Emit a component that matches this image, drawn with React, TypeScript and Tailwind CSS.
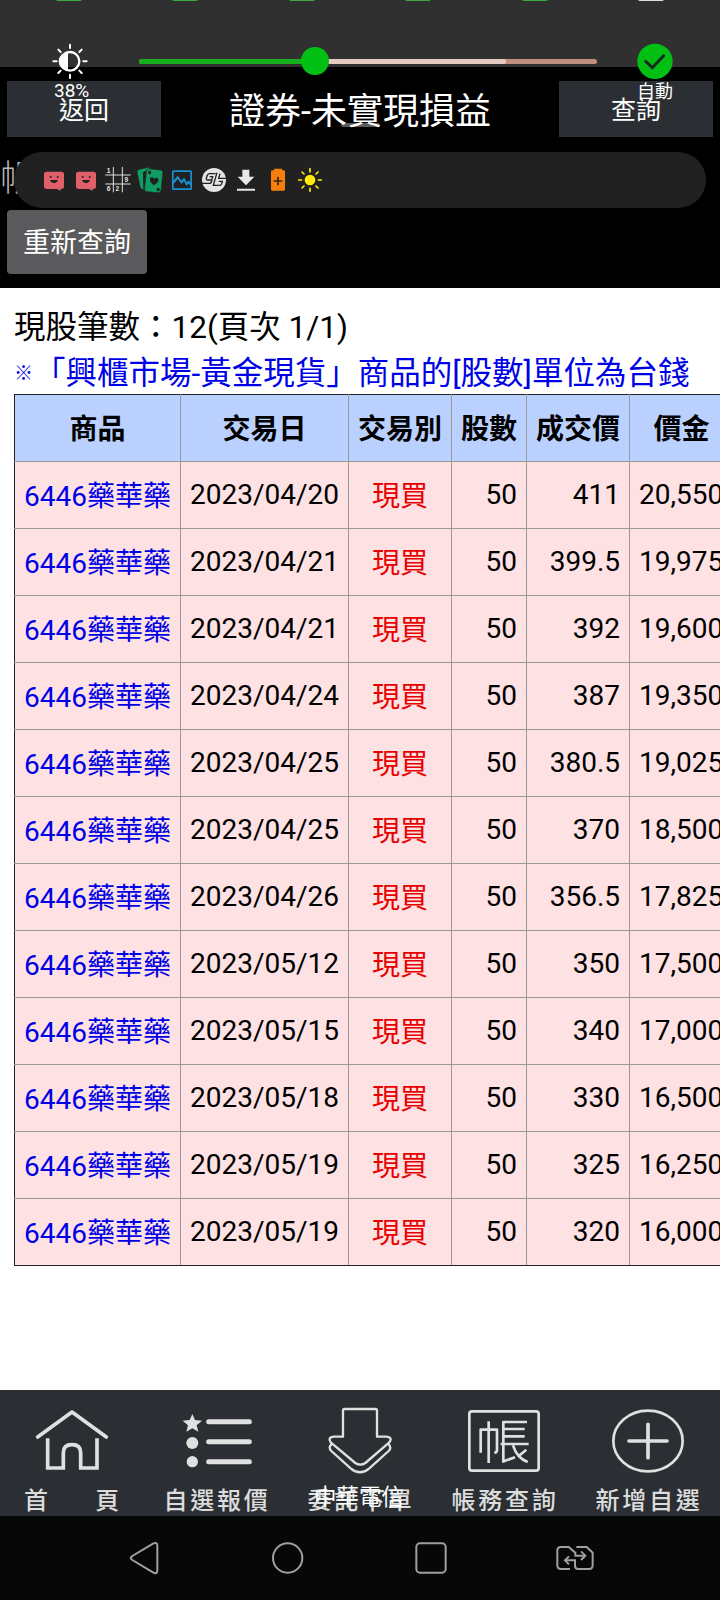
import type { ReactNode } from 'react';

const trades = [
  { date: '2023/04/20', price: '411', amount: '20,550' },
  { date: '2023/04/21', price: '399.5', amount: '19,975' },
  { date: '2023/04/21', price: '392', amount: '19,600' },
  { date: '2023/04/24', price: '387', amount: '19,350' },
  { date: '2023/04/25', price: '380.5', amount: '19,025' },
  { date: '2023/04/25', price: '370', amount: '18,500' },
  { date: '2023/04/26', price: '356.5', amount: '17,825' },
  { date: '2023/05/12', price: '350', amount: '17,500' },
  { date: '2023/05/15', price: '340', amount: '17,000' },
  { date: '2023/05/18', price: '330', amount: '16,500' },
  { date: '2023/05/19', price: '325', amount: '16,250' },
  { date: '2023/05/19', price: '320', amount: '16,000' },
];

function StatusIcon({ children }: { children: ReactNode }) {
  return (
    <svg viewBox="0 0 96 96" className="h-8 w-8 shrink-0">
      {children}
    </svg>
  );
}

function ChatIcon() {
  return (
    <StatusIcon>
      <path
        d="M26 23h44q8 0 8 8v36q0 8-8 8h-2l-1 6-10-6H26q-8 0-8-8V31q0-8 8-8z"
        fill="#e0606a"
      />
      <circle cx="38" cy="39" r="3" fill="#222" />
      <circle cx="59" cy="39" r="3" fill="#222" />
      <path d="M36 48h24q-3 9-12 9t-12-9z" fill="#222" />
    </StatusIcon>
  );
}

function StatusPill() {
  return (
    <div className="absolute top-[152px] left-[14px] flex h-14 w-[692px] items-center rounded-full bg-[#212121] pl-6">
      <ChatIcon />
      <ChatIcon />
      <StatusIcon>
        <path d="M34 9v76M61 9v76M10 33h76M10 60h76" stroke="#e0e0e0" strokeWidth="3" />
        <g fill="#e0e0e0" fontSize="20" fontWeight="bold" textAnchor="middle" fontFamily="Liberation Sans, sans-serif">
          <text x="20" y="28">1</text>
          <text x="73" y="55">9</text>
          <text x="20" y="82">6</text>
          <text x="46" y="82">2</text>
        </g>
      </StatusIcon>
      <StatusIcon>
        <path d="M15 17l27-6q5-1 6 3l2 6-17 1q-6 1-6 7l1 49-5-3q-3-2-4-6L10 25q-1-6 5-8z" fill="#0f9b62" />
        <g transform="rotate(6 60 52)">
          <rect x="34" y="16" width="50" height="69" rx="8" fill="#0f9b62" stroke="#212121" strokeWidth="2" />
          <path d="M60 64c-7-6-13-11-13-17 0-7 9-9 13-2 4-7 13-5 13 2 0 6-6 11-13 17z" fill="#212121" />
          <circle cx="44" cy="27" r="5" fill="#212121" />
          <circle cx="75" cy="75" r="5" fill="#212121" />
        </g>
      </StatusIcon>
      <StatusIcon>
        <rect x="20.500" y="21.500" width="55" height="54" rx="2" fill="none" stroke="#1a90d4" strokeWidth="5" />
        <path d="M21 57l14-17 12 15 7-9 8 14 6-6 8 9" fill="none" stroke="#1a90d4" strokeWidth="6" />
      </StatusIcon>
      <StatusIcon>
        <circle cx="48" cy="48" r="36" fill="#e4e4e4" />
        <g fill="none" stroke="#212121" strokeWidth="4">
          <path d="M53 29H35q-6 0-8 7l-2 7q-1 5 4 5h12l3-10h-9" />
          <path d="M12 58h23q4 0 5-4l2-6" />
          <path d="M57 26l-11 38h18q5 0 7-5l2-7H62" />
          <path d="M66 29l-4 14h22" />
        </g>
      </StatusIcon>
      <StatusIcon>
        <path d="M37 17h21v21h15L48 64 23 38h14zM21 74h54v6H21z" fill="#e8e8e8" />
      </StatusIcon>
      <StatusIcon>
        <path d="M36 14h24v5h5q4 0 4 4v53q0 4-4 4H31q-4 0-4-4V23q0-4 4-4h5z" fill="#f57f0a" />
        <path d="M48 38v26M35 51h26" stroke="#3a2410" strokeWidth="5" />
      </StatusIcon>
      <StatusIcon>
        <circle cx="48" cy="48" r="16" fill="#ffeb0a" />
        <path
          d="M48 14v9M48 73v9M14 48h9M73 48h9M24 24l6 6M66 66l6 6M24 72l6-6M66 30l6-6"
          stroke="#ffeb0a"
          strokeWidth="5"
          strokeLinecap="round"
        />
      </StatusIcon>
    </div>
  );
}

// Brightness row of the notification shade, drawn over the app header
function BrightnessRow() {
  return (
    <>
      <svg viewBox="0 0 108 108" className="absolute top-[43px] left-[52px] h-9 w-9">
        <circle cx="54" cy="55" r="28" fill="none" stroke="#fff" strokeWidth="7" />
        <path d="M48 27a28 28 0 0 0 0 56z" fill="#fff" />
        <path
          d="M54 5v10M54 95v10M4 55h10M94 55h10M19 20l7 7M82 83l7 7M19 90l7-7M82 27l7-7"
          stroke="#fff"
          strokeWidth="6"
          strokeLinecap="round"
        />
      </svg>
      <div className="absolute top-[59px] left-[139px] flex h-[5px] w-[458px] items-center overflow-hidden rounded-sm bg-[#c28e7e]">
        <div className="h-full w-[176px] bg-[#16b01e]" />
        <div className="h-full w-[191px] rounded-r-sm bg-[#e4cac2]" />
      </div>
      <div className="absolute top-[47px] left-[301px] h-7 w-7 rounded-full bg-[#02c013]" />
      <svg viewBox="0 0 108 108" className="absolute top-[43px] left-[637px] h-9 w-9">
        <circle cx="54" cy="55" r="53" fill="#02c013" />
        <path d="M26 55l20 19 34-36" fill="none" stroke="#1d2b1f" strokeWidth="9" strokeLinecap="round" />
      </svg>
      <span className="absolute top-[79px] left-[54px] text-[19px] leading-6">38%</span>
      <span className="absolute top-[80px] left-[637px] text-[18px] leading-6">自動</span>
    </>
  );
}

function Header() {
  return (
    <header className="relative flex h-[288px] flex-col bg-black text-white">
      <div className="flex h-[67px] justify-between overflow-hidden bg-[#303030] px-[56px]">
        {[0, 1, 2, 3, 4].map((i) => (
          <div key={i} className="-mt-px h-[2px] w-[26px] rounded-b-full bg-[#3aa843]" />
        ))}
        <div className="-mt-px h-[2px] w-[26px] rounded-b-full bg-[#ddd]" />
      </div>
      <div className="absolute top-[123px] left-[341px] h-1 w-[39px] rounded-full bg-[#5a5a5a]" />
      <div className="relative mt-[14px] flex h-14 items-center justify-between px-[7px]">
        <button className="h-14 w-[154px] bg-[#2b2f33] pt-1 text-[25px] leading-[52px]">返回</button>
        <h1 className="pt-[5px] text-[36px] leading-[56px]">證券-未實現損益</h1>
        <button className="h-14 w-[154px] bg-[#2b2f33] pt-1 text-[25px] leading-[52px]">查詢</button>
      </div>
      <div className="mt-4 h-[57px] pt-[3px] text-[36px] leading-[46px] font-light text-[#b5b5b5]">帳</div>
      <button className="ml-[7px] h-16 w-[140px] shrink-0 rounded bg-[#5a5a5c] pt-[2px] text-[27px]">重新查詢</button>
      <StatusPill />
      <BrightnessRow />
    </header>
  );
}

function TradeTable() {
  return (
    <table className="w-[719px] table-fixed border-collapse text-[28px] leading-8 whitespace-nowrap">
      <colgroup>
        <col className="w-[166px]" />
        <col className="w-[168px]" />
        <col className="w-[103px]" />
        <col className="w-[75px]" />
        <col className="w-[103px]" />
        <col className="w-[104px]" />
      </colgroup>
      <thead>
        <tr className="h-[67px] bg-[#bad1ff]">
          {['商品', '交易日', '交易別', '股數', '成交價', '價金'].map((name) => (
            <th key={name} className="border border-[#999] border-t-[#222] p-0 pt-[3px] font-bold first:border-l-[#222]">
              {name}
            </th>
          ))}
        </tr>
      </thead>
      <tbody>
        {trades.map((trade, i) => (
          <tr key={i} className="h-[67px] bg-[#fde1e3] *:border *:border-[#999] last:*:border-b-[#222]">
            <td className="border-l-[#222]! p-0 pt-1 text-center text-[#0000e6]">6446藥華藥</td>
            <td className="p-0 text-center">{trade.date}</td>
            <td className="p-0 pt-1 text-center text-[#e80000]">現買</td>
            <td className="p-0 pr-[9px] text-right">50</td>
            <td className="p-0 pr-[9px] text-right">{trade.price}</td>
            <td className="p-0 pr-[4px] pl-[9px] text-left">{trade.amount}</td>
          </tr>
        ))}
      </tbody>
    </table>
  );
}

function TabItem({ label, children }: { label: ReactNode; children: ReactNode }) {
  return (
    <div className="flex w-36 flex-col items-center pt-[15px]">
      <svg
        viewBox="0 0 252 210"
        className="h-[70px] w-[84px]"
        fill="none"
        stroke="#e0e0e0"
        strokeLinecap="round"
        strokeLinejoin="round"
      >
        {children}
      </svg>
      <div className="mt-[11px] ml-[2px] text-[24px] leading-[30px] font-medium tracking-[2.800px] whitespace-pre text-[#dcdcdc]">
        {label}
      </div>
    </div>
  );
}

function TabBar() {
  return (
    <nav className="relative flex h-[126px] bg-[#2b2f33]">
      <TabItem
        label={
          <span className="flex w-[98px] justify-between">
            <span>首</span>
            <span>頁</span>
          </span>
        }
      >
        <path d="M23 96L126 21l103 75" strokeWidth="11" />
        <path d="M53 100v89h47v-46q0-24 26-24t26 24v46h49v-89" strokeWidth="11" strokeLinecap="butt" strokeLinejoin="miter" />
      </TabItem>
      <TabItem label="自選報價">
        <path d="M55 27l8 18 21 2-16 14 5 19-18-10-18 10 5-19-16-14 21-2z" fill="#e0e0e0" stroke="none" />
        <circle cx="55" cy="114" r="18" fill="#e0e0e0" stroke="none" />
        <circle cx="55" cy="170" r="17" fill="#e0e0e0" stroke="none" />
        <path d="M104 50h122M104 110h122M104 170h122" strokeWidth="15" />
      </TabItem>
      <TabItem label="委託下單">
        <path
          d="M80 12h92q5 0 5 5v78h28q20 2 9 17l-72 62q-15 10-30 0l-74-62q-10-15 9-17h28V17q0-5 5-5z"
          strokeWidth="7"
        />
        <path d="M40 118q-10 9 0 20l58 52q28 24 56 0l58-52q10-10-1-22" strokeWidth="7" />
      </TabItem>
      <TabItem label="帳務查詢">
        <rect x="22" y="19" width="208" height="178" rx="8" strokeWidth="8" />
        <path
          d="M80 49v125M56 143V74h49v61q0 8-8 8M124 173V51h71M124 72h64M124 94h64M116 117h84M124 169l35-12M153 121q12 38 44 50M193 134l-22 18"
          strokeWidth="8"
          strokeLinecap="butt"
        />
      </TabItem>
      <TabItem label="新增自選">
        <ellipse cx="126" cy="108" rx="104" ry="91" strokeWidth="8" />
        <path d="M126 58v100M69 108h114" strokeWidth="11" />
      </TabItem>
      {/* carrier name */}
      <span className="absolute top-[91px] left-[314px] text-[22.500px] leading-8 text-white">中華電信</span>
    </nav>
  );
}

function SystemNav() {
  return (
    <div className="flex h-[84px] items-center justify-between bg-[#070707] px-[121px]">
      <svg viewBox="0 0 144 144" className="h-12 w-12" fill="none" stroke="#a0a0a0" strokeWidth="6" strokeLinejoin="round">
        <path d="M34 66l62-37q13-6 13 6v74q0 13-13 6L34 78q-9-6 0-12z" />
      </svg>
      <svg viewBox="0 0 144 144" className="h-12 w-12" fill="none" stroke="#a0a0a0" strokeWidth="6">
        <circle cx="71" cy="72" r="44" />
      </svg>
      <svg viewBox="0 0 144 144" className="h-12 w-12" fill="none" stroke="#a0a0a0" strokeWidth="6">
        <rect x="25" y="28" width="88" height="88" rx="11" />
      </svg>
      <svg viewBox="0 0 144 144" className="h-12 w-12" fill="none" stroke="#a0a0a0" strokeWidth="6">
        <path d="M57 105H30q-11 0-11-11V50q0-11 11-11h23l20 17v9h28" />
        <path d="M76 39h31l18 17v38q0 11-11 11H82q-10 0-10-10V79H43" />
        <path d="M90 52l13 13-13 13M54 67L42 79l12 12" />
      </svg>
    </div>
  );
}

export default function App() {
  return (
    <div className="flex h-[1600px] w-[720px] flex-col overflow-hidden bg-white font-[Roboto,'Noto_Sans_CJK_TC',sans-serif] text-black">
      <Header />
      <main className="flex-1 overflow-hidden pt-4 pl-[14px]">
        <p className="h-[46px] pt-px text-[31.500px] leading-[46px]">現股筆數：12(頁次 1/1)</p>
        <p className="flex h-11 items-center pt-[3px] text-[31.500px] leading-[46px] whitespace-nowrap text-[#0000e6]">
          <span className="w-5 shrink-0 text-[19px] font-bold">※</span>
          「興櫃市場-黃金現貨」商品的[股數]單位為台錢
        </p>
        <TradeTable />
      </main>
      <TabBar />
      <SystemNav />
    </div>
  );
}
